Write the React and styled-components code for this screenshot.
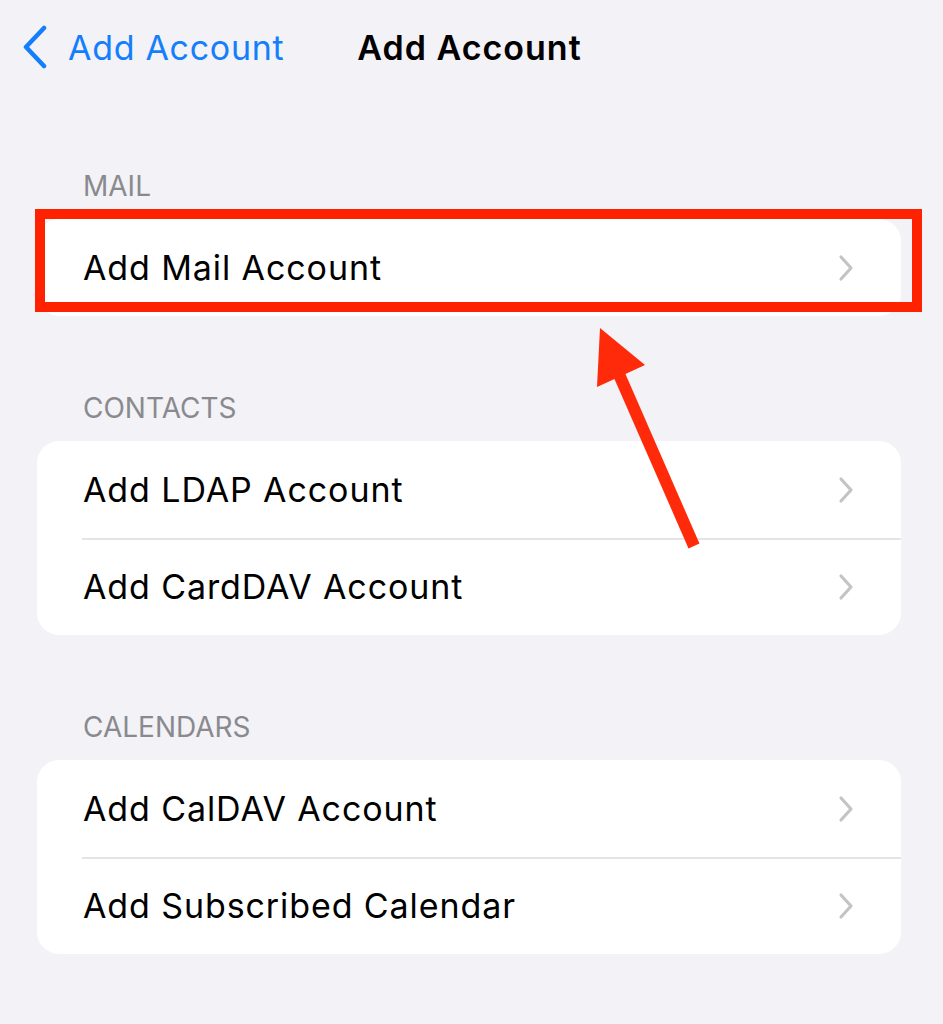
import React from "react";
import styled, { createGlobalStyle } from "styled-components";

const GlobalStyle = createGlobalStyle`
  html, body { margin: 0; padding: 0; background: #f2f2f7; }
  body { font-family: Inter, "Noto Sans", "Liberation Sans", sans-serif; -webkit-font-smoothing: antialiased; }
`;

const Page = styled.div`
  position: relative;
  width: 943px;
  height: 1024px;
  overflow: hidden;
  background: #f2f2f7;
`;

const NavBar = styled.div`
  height: 94px;
  display: grid;
  grid-template-columns: 1fr auto 1fr;
  align-items: center;
`;

const BackButton = styled.div`
  display: flex;
  align-items: center;
  gap: 20px;
  padding-left: 22px;
  color: #157efb;
  font-size: 34px;
  letter-spacing: 0.7px;
`;

const Title = styled.div`
  font-size: 34px;
  font-weight: 600;
  color: #000;
  letter-spacing: 1px;
  margin-right: 4px;
`;

const Content = styled.div`
  padding: 0 42px 0 37px;
`;

const Section = styled.section`
  margin-top: 75px;
`;

const Header = styled.div`
  padding-left: 46px;
  font-size: 28px;
  line-height: 34px;
  color: #8a8a8e;
  margin-bottom: 16px;
`;

const Card = styled.div`
  background: #fff;
  border-radius: 22px;
  overflow: hidden;
`;

const Row = styled.div`
  position: relative;
  height: 97px;
  display: flex;
  align-items: center;
  justify-content: space-between;
  padding: 0 45px 0 46px;
  font-size: 34px;
  color: #000;
  letter-spacing: 0.9px;
  & + &::before {
    content: "";
    position: absolute;
    top: 0;
    left: 45px;
    right: 0;
    height: 2px;
    background: #e3e3e8;
  }
`;

const Highlight = styled.div`
  position: absolute;
  left: 35px;
  top: 209px;
  width: 867px;
  height: 83px;
  border: 10px solid #ff2200;
  pointer-events: none;
`;

const ArrowLayer = styled.svg`
  position: absolute;
  left: 0;
  top: 0;
  pointer-events: none;
`;

const Chevron = () => (
  <svg width="20" height="28" viewBox="0 0 20 28" fill="none">
    <path d="M5 3 L15 14 L5 25" stroke="#c4c4c7" strokeWidth="3.2" strokeLinecap="round" strokeLinejoin="round" />
  </svg>
);

const BackChevron = () => (
  <svg width="26" height="44" viewBox="0 0 26 44" fill="none">
    <path d="M22 3 L4 22 L22 41" stroke="#157efb" strokeWidth="4.5" strokeLinecap="round" strokeLinejoin="round" />
  </svg>
);

const sections = [
  { title: "MAIL", rows: ["Add Mail Account"] },
  { title: "CONTACTS", rows: ["Add LDAP Account", "Add CardDAV Account"] },
  { title: "CALENDARS", rows: ["Add CalDAV Account", "Add Subscribed Calendar"] },
];

export default function App() {
  return (
    <>
      <GlobalStyle />
      <Page>
        <NavBar>
          <BackButton>
            <BackChevron />
            <span>Add Account</span>
          </BackButton>
          <Title>Add Account</Title>
          <div />
        </NavBar>
        <Content>
          {sections.map((s) => (
            <Section key={s.title}>
              <Header>{s.title}</Header>
              <Card>
                {s.rows.map((r) => (
                  <Row key={r}>
                    <span>{r}</span>
                    <Chevron />
                  </Row>
                ))}
              </Card>
            </Section>
          ))}
        </Content>
        <Highlight />
        <ArrowLayer width="943" height="1024" viewBox="0 0 943 1024">
          <line x1="694" y1="546" x2="618" y2="372" stroke="#ff2a0a" strokeWidth="12" />
          <polygon points="600,328 597,387 645,365" fill="#ff2a0a" />
        </ArrowLayer>
      </Page>
    </>
  );
}
